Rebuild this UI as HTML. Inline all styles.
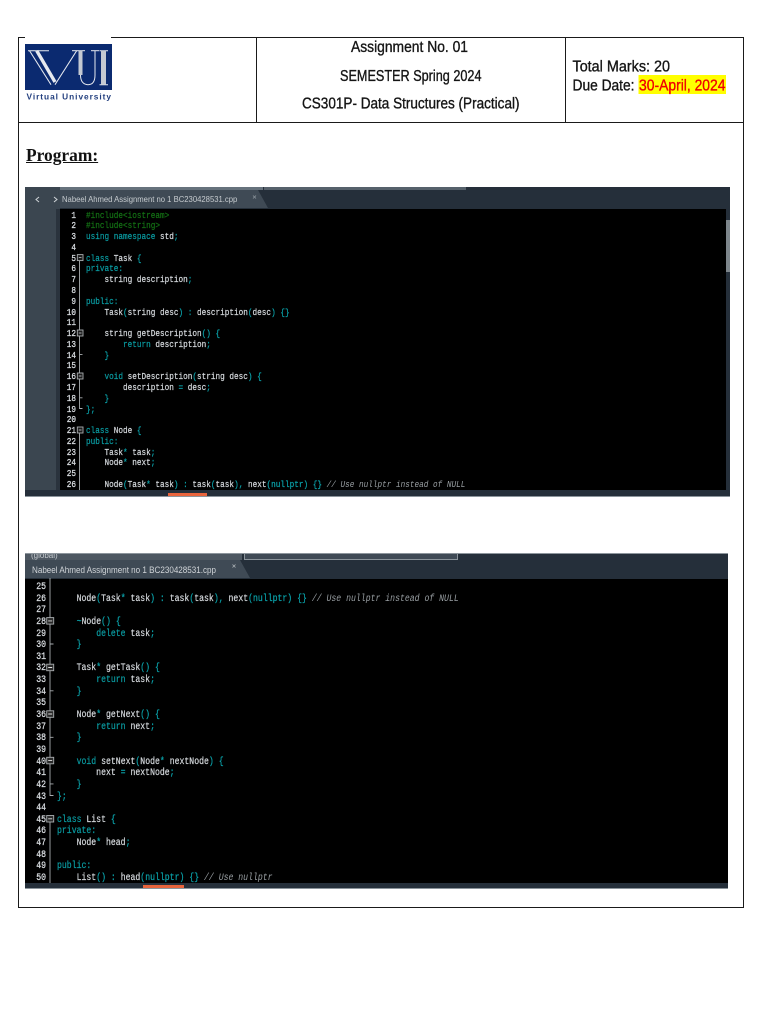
<!DOCTYPE html>
<html lang="en"><head><meta charset="utf-8"><title>Assignment No. 01</title>
<style>
html,body{margin:0;padding:0;background:#fff;width:768px;height:1024px;overflow:hidden}
body{position:relative}
.a{position:absolute}
.line{position:absolute;background:#1a1a1a}
pre{position:absolute;margin:0;font-family:"Liberation Mono",monospace;color:#d4d8dc;white-space:pre;font-weight:400;-webkit-text-stroke:.22px currentColor;transform-origin:left top}
.n{text-align:right;color:#d8dce0;transform-origin:right top!important;-webkit-text-stroke:.3px currentColor}
.s1 pre{font-size:9.2px;line-height:10.78px;top:210.500px;transform:scaleX(.839)}
.s2 pre{font-size:9.8px;line-height:11.64px;top:581px;transform:scaleX(.833)}
i{font-style:normal;color:#0aa2aa}
b{font-weight:400;color:#0a9aa0}
u{text-decoration:none;color:#136f14}
em{color:#9aa0a4;font-weight:400;font-style:italic;-webkit-text-stroke:0}
.shot{filter:blur(.35px)}
svg text{font-family:"Liberation Sans",sans-serif}
</style></head><body>

<!-- table lines -->
<div class="line" style="left:18px;top:37px;width:726px;height:1px"></div>
<div class="line" style="left:18px;top:122px;width:726px;height:1px"></div>
<div class="line" style="left:18px;top:907px;width:726px;height:1px"></div>
<div class="line" style="left:18px;top:37px;width:1px;height:871px"></div>
<div class="line" style="left:743px;top:37px;width:1px;height:871px"></div>
<div class="line" style="left:256px;top:37px;width:1px;height:85px"></div>
<div class="line" style="left:565px;top:37px;width:1px;height:85px"></div>
<div class="a" style="left:25px;top:36px;width:86px;height:3px;background:#fff"></div>

<!-- logo -->
<svg class="a" style="left:25px;top:44px;filter:blur(.35px)" width="87" height="58" viewBox="0 0 87 58">
<rect width="87" height="46" fill="#0b2a70"/>
<g fill="none" stroke="#e6e9ef">
<path d="M3 6.700H24" stroke-width="1"/>
<path d="M4.500 6.700L26 40.700" stroke-width="1"/>
<path d="M11.700 6.700L30 38" stroke-width="3.400"/>
<path d="M30 40.700L51.700 6.700" stroke-width="1"/>
<path d="M47 6.700H60" stroke-width="1"/>
<path d="M55.500 6.700V31C55.500 38 59 40.700 63 40.700C67.500 40.700 70 38 70 31V6.700" stroke-width="1"/>
<path d="M55.500 6.700V31" stroke-width="4" stroke="#c4c9d2"/>
<path d="M66 6.700H74" stroke-width="1"/>
<path d="M74.500 6.700H83M74.500 40.700H83" stroke-width="1"/>
<path d="M78.500 6.700V40.700" stroke-width="5" stroke="#c4c9d2"/>
</g>
<text x="1.500" y="55.500" font-size="8.300" font-weight="700" fill="#24407f" textLength="84.500" lengthAdjust="spacing">Virtual University</text>
</svg>

<!-- header text -->
<svg class="a" style="left:0;top:0;filter:blur(.25px)" width="768" height="130">
<g font-size="15.500" fill="#151515" stroke="#151515" stroke-width=".35">
<text x="351" y="52" textLength="117" lengthAdjust="spacingAndGlyphs">Assignment No. 01</text>
<text x="340" y="81" textLength="141.500" lengthAdjust="spacingAndGlyphs">SEMESTER Spring 2024</text>
<text x="302" y="108.500" textLength="217.500" lengthAdjust="spacingAndGlyphs">CS301P- Data Structures (Practical)</text>
<text x="572.500" y="71.500" textLength="97.500" lengthAdjust="spacingAndGlyphs">Total Marks: 20</text>
<text x="572.500" y="90.500" textLength="62" lengthAdjust="spacingAndGlyphs">Due Date:</text>
</g>
<rect x="638.500" y="75" width="87.500" height="19" fill="#ffff00"/>
<text x="639" y="90.500" font-size="15.500" fill="#f00000" stroke="#f00000" stroke-width=".35" textLength="86.500" lengthAdjust="spacingAndGlyphs">30-April, 2024</text>
</svg>

<div class="a" style="left:26px;top:144px;font:700 17.400px/22px 'Liberation Serif',serif;color:#111;text-decoration:underline">Program:</div>

<!-- Screenshot 1 -->
<div class="shot s1">
<div class="a" style="left:25px;top:187px;width:705px;height:309px;background:#252f3a"></div>
<div class="a" style="left:25px;top:187px;width:35px;height:303px;background:#3b4650"></div>
<div class="a" style="left:56px;top:209px;width:4px;height:281px;background:#2a333d"></div>
<div class="a" style="left:60px;top:187px;width:203px;height:2.500px;background:#66727c"></div>
<div class="a" style="left:264px;top:187px;width:202px;height:2.500px;background:#56616b"></div>
<svg class="a" style="left:25px;top:187px" width="260" height="22"><path d="M35 3H233L243 21H35Z" fill="#3f4a55"/><path d="M14 10L11 12.500L14 15M29 10L32 12.500L29 15" fill="none" stroke="#d0d4d8" stroke-width="1"/><path d="M228 8.500L231 11.500M231 8.500L228 11.500" stroke="#8a939b" stroke-width=".8"/></svg>
<div class="a" style="left:62px;top:193.500px;font:8.600px/11px 'Liberation Sans',sans-serif;color:#c6cbcf;white-space:nowrap;transform:scaleX(.895);transform-origin:left top">Nabeel Ahmed Assignment no 1 BC230428531.cpp</div>
<div class="a" style="left:60px;top:209px;width:666px;height:281px;background:#000"></div>
<div class="a" style="left:726px;top:209px;width:4px;height:281px;background:#252f3a"></div>
<div class="a" style="left:726px;top:220px;width:4px;height:52px;background:#7d858b"></div>
<div class="a" style="left:168px;top:493.300px;width:39px;height:2.700px;background:#e8643c"></div>
<div class="a" style="left:25px;top:495.500px;width:705px;height:1px;background:#8b949b"></div>
<pre class="n" style="left:56px;width:20px">1
2
3
4
5
6
7
8
9
10
11
12
13
14
15
16
17
18
19
20
21
22
23
24
25
26</pre>
<svg class="a" style="left:76px;top:209px;overflow:visible" width="12" height="281"><g stroke="#a9adb0" stroke-width=".9" fill="none"><path d="M3.500 52V199.500H6.500M3.500 145.600H6.500M3.500 188.800H6.500M3.500 224V281"/><g fill="#1c1c1c"><rect x="1.300" y="45.600" width="5.700" height="6"/><rect x="1.300" y="121" width="5.700" height="6"/><rect x="1.300" y="164" width="5.700" height="6"/><rect x="1.300" y="218" width="5.700" height="6"/></g><path d="M2.800 48.600H5.500M2.800 124H5.500M2.800 167H5.500M2.800 221H5.500"/></g></svg>
<pre style="left:86px"><u>#include&lt;iostream&gt;</u>
<u>#include&lt;string&gt;</u>
<b>using namespace</b> std<i>;</i>

<b>class</b> Task <i>{</i>
<b>private:</b>
    string description<i>;</i>

<b>public:</b>
    Task<i>(</i>string desc<i>)</i> <i>:</i> description<i>(</i>desc<i>)</i> <i>{}</i>

    string getDescription<i>()</i> <i>{</i>
        <b>return</b> description<i>;</i>
    <i>}</i>

    <b>void</b> setDescription<i>(</i>string desc<i>)</i> <i>{</i>
        description <i>=</i> desc<i>;</i>
    <i>}</i>
<i>};</i>

<b>class</b> Node <i>{</i>
<b>public:</b>
    Task<i>*</i> task<i>;</i>
    Node<i>*</i> next<i>;</i>

    Node<i>(</i>Task<i>*</i> task<i>)</i> <i>:</i> task<i>(</i>task<i>),</i> next<i>(nullptr)</i> <i>{}</i> <em>// Use nullptr instead of NULL</em></pre>
</div>

<!-- Screenshot 2 -->
<div class="shot s2">
<div class="a" style="left:25px;top:553px;width:703px;height:335px;background:#252f3a"></div>
<div class="a" style="left:25px;top:553px;width:217px;height:7px;background:#4e5862;overflow:hidden;color:#c6cbcf;font:8px/5px 'Liberation Sans',sans-serif;text-indent:6px">(global)</div>
<div class="a" style="left:243.500px;top:553px;width:214px;height:7px;background:#3f4a55;border-bottom:1px solid #8b949b;border-left:1px solid #8b949b;border-right:1px solid #8b949b;box-sizing:border-box"></div>
<div class="a" style="left:25px;top:553px;width:703px;height:1px;background:#8d959c"></div>
<svg class="a" style="left:25px;top:559px" width="235" height="20"><path d="M0 1H215L225 19H0Z" fill="#3f4a55"/><path d="M207.500 5.500L210.500 8.500M210.500 5.500L207.500 8.500" stroke="#aab0b5" stroke-width=".8"/></svg>
<div class="a" style="left:31.500px;top:564px;font:9px/12px 'Liberation Sans',sans-serif;color:#d0d4d8;white-space:nowrap;transform:scaleX(.897);transform-origin:left top">Nabeel Ahmed Assignment no 1 BC230428531.cpp</div>
<div class="a" style="left:25px;top:578.500px;width:703px;height:304.500px;background:#000"></div>
<div class="a" style="left:143px;top:885.200px;width:41px;height:2.800px;background:#e8643c"></div>
<div class="a" style="left:25px;top:887.500px;width:703px;height:1px;background:#8b949b"></div>
<pre class="n" style="left:25px;width:21px">25
26
27
28
29
30
31
32
33
34
35
36
37
38
39
40
41
42
43
44
45
46
47
48
49
50</pre>
<svg class="a" style="left:46px;top:578px;overflow:visible" width="12" height="305"><g stroke="#a9adb0" stroke-width=".9" fill="none"><path d="M4 0V217.500H7.500M4 66H7.500M4 112.800H7.500M4 159.300H7.500M4 205.900H7.500M4 244V305"/><g fill="#2a2a2a"><rect x=".700" y="39.600" width="7" height="6.500"/><rect x=".700" y="86.200" width="7" height="6.500"/><rect x=".700" y="132.800" width="7" height="6.500"/><rect x=".700" y="179.300" width="7" height="6.500"/><rect x=".700" y="237.500" width="7" height="6.500"/></g><path d="M2.200 42.900H6.200M2.200 89.500H6.200M2.200 136H6.200M2.200 182.600H6.200M2.200 240.800H6.200" stroke="#ddd"/></g></svg>
<pre style="left:56.700px">&#32;
    Node<i>(</i>Task<i>*</i> task<i>)</i> <i>:</i> task<i>(</i>task<i>),</i> next<i>(nullptr)</i> <i>{}</i> <em>// Use nullptr instead of NULL</em>

    <i>~</i>Node<i>()</i> <i>{</i>
        <b>delete</b> task<i>;</i>
    <i>}</i>

    Task<i>*</i> getTask<i>()</i> <i>{</i>
        <b>return</b> task<i>;</i>
    <i>}</i>

    Node<i>*</i> getNext<i>()</i> <i>{</i>
        <b>return</b> next<i>;</i>
    <i>}</i>

    <b>void</b> setNext<i>(</i>Node<i>*</i> nextNode<i>)</i> <i>{</i>
        next <i>=</i> nextNode<i>;</i>
    <i>}</i>
<i>};</i>

<b>class</b> List <i>{</i>
<b>private:</b>
    Node<i>*</i> head<i>;</i>

<b>public:</b>
    List<i>()</i> <i>:</i> head<i>(nullptr)</i> <i>{}</i> <em>// Use nullptr</em></pre>
</div>
</body></html>
